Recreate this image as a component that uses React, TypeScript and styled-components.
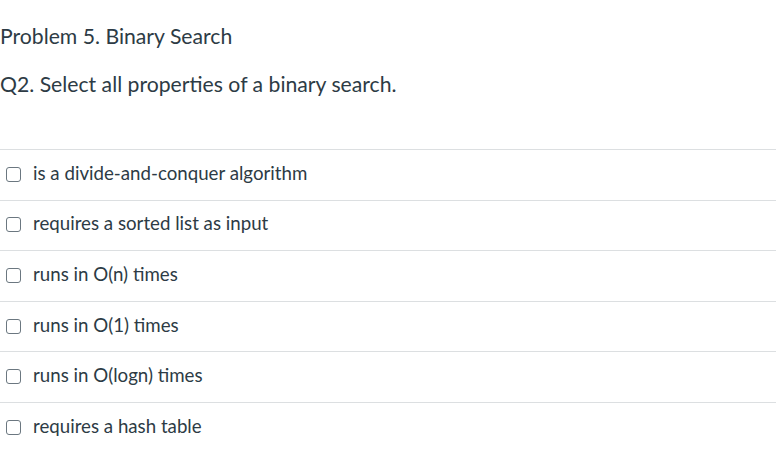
import { createGlobalStyle, styled } from "styled-components";

const GlobalStyle = createGlobalStyle`
  html, body {
    margin: 0;
    padding: 0;
    background: #fff;
  }
  body {
    font-family: Lato, "Open Sans", "Liberation Sans", sans-serif;
    color: #2d3b45;
  }
`;

const answers = [
  "is a divide-and-conquer algorithm",
  "requires a sorted list as input",
  "runs in O(n) times",
  "runs in O(1) times",
  "runs in O(logn) times",
  "requires a hash table",
];

export default function App() {
  return (
    <>
      <GlobalStyle />
      <Page>
        <Title>Problem 5. Binary Search</Title>
        <Question>Q2. Select all properties of a binary search.</Question>
        <AnswerList>
          {answers.map((text) => (
            <Answer key={text}>
              <Checkbox type="checkbox" />
              <span>{text}</span>
            </Answer>
          ))}
        </AnswerList>
      </Page>
    </>
  );
}

const Page = styled.div`
  width: 776px;
  height: 450px;
  overflow: hidden;
  padding-top: 23px;
  box-sizing: border-box;
`;

const Title = styled.h2`
  margin: 0;
  font: 400 21.2px/26px Lato, sans-serif;
`;

const Question = styled.h3`
  margin: 22px 0 0;
  font: 400 21.2px/26px Lato, sans-serif;
`;

const AnswerList = styled.div`
  margin-top: 52px;
  display: flex;
  flex-direction: column;
`;

const Answer = styled.label`
  display: flex;
  align-items: center;
  gap: 12px;
  height: 50.6px;
  box-sizing: border-box;
  border-top: 1px solid #dcdfe1;
  padding: 0 0 4px 6px;
  font: 400 18.7px/24px Lato, sans-serif;
`;

const Checkbox = styled.input`
  appearance: none;
  margin: 3px 0 0;
  width: 15px;
  height: 15px;
  box-sizing: border-box;
  border: 1px solid #6b7780;
  border-radius: 3px;
  background: #fff;
  flex-shrink: 0;
`;
